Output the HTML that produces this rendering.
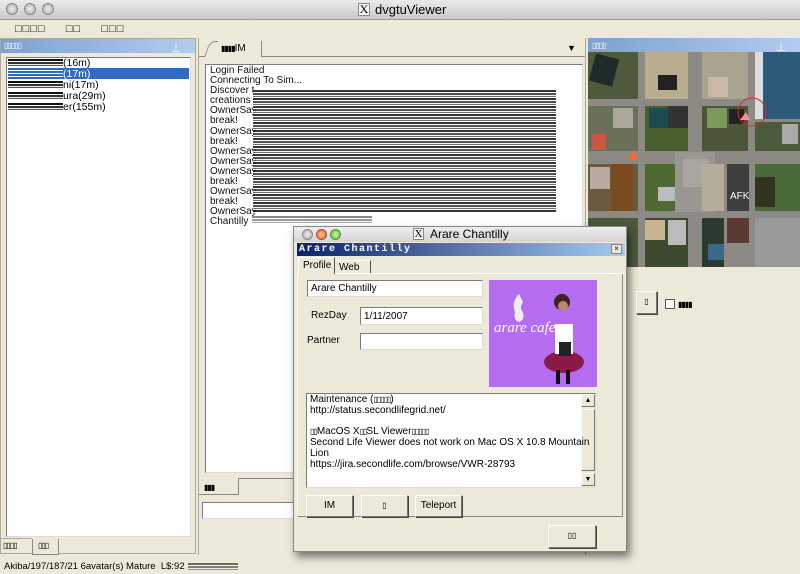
<!DOCTYPE html>
<html><head><style>
*{box-sizing:border-box;margin:0;padding:0}
body{width:800px;height:574px;overflow:hidden;background:#ece9d8;font-family:"Liberation Sans","Noto Sans CJK JP",sans-serif;font-size:11px;color:#000;position:relative}
.a{position:absolute}
.tl{width:12px;height:12px;border-radius:50%;position:absolute}
.sunk{background:#fff;border:1px solid #7a7a7a;border-right-color:#dcdcdc;border-bottom-color:#dcdcdc}
.btn{position:absolute;background:#ece9d8;border:1px solid #fff;border-right-color:#777;border-bottom-color:#777;box-shadow:1px 1px 0 #444;text-align:center;font-size:10px;line-height:20px}
.scr{position:absolute;background:repeating-linear-gradient(180deg,#111 0 2px,#fff 2px 3px,#333 3px 5px,#eee 5px 6px,#555 6px 7px,#fff 7px 8px);}
.mono{font-size:8px;letter-spacing:-1px}
</style></head><body>
<div class="a" style="left:0;top:0;width:800px;height:20px;background:linear-gradient(#ebebeb,#c9c9c9);border-bottom:1px solid #999"></div>
<div class="tl" style="left:6px;top:3px;background:radial-gradient(#eee,#aaa);border:1px solid #888"></div>
<div class="tl" style="left:24px;top:3px;background:radial-gradient(#eee,#aaa);border:1px solid #888"></div>
<div class="tl" style="left:42px;top:3px;background:radial-gradient(#eee,#aaa);border:1px solid #888"></div>
<div class="a" style="left:358px;top:3px;width:12px;height:13px;border:1px solid #888;background:#f4f4f4;font-family:'Liberation Serif',serif;font-size:12px;line-height:11px;text-align:center">X</div>
<div class="a" style="left:375px;top:2px;font-size:13px">dvgtuViewer</div>
<div class="a" style="left:15px;top:23px;font-size:11px;letter-spacing:1px">□□□□&nbsp;&nbsp;&nbsp;&nbsp;&nbsp;□□&nbsp;&nbsp;&nbsp;&nbsp;&nbsp;□□□</div>
<div class="a" style="left:0;top:38px;width:196px;height:516px;border:1px solid #aca899"></div>
<div class="a" style="left:1px;top:39px;width:194px;height:14px;background:linear-gradient(90deg,#7da2ce,#b3cbef)"></div>
<div class="a mono" style="left:4px;top:41px;color:#fff">▯▯▯▯▯</div>
<div class="a" style="left:171px;top:40px;color:#fff;font-size:10px">⊥</div>
<div class="a sunk" style="left:6px;top:57px;width:185px;height:480px"></div>
<div class="a" style="left:8px;top:68px;width:181px;height:11px;background:#316ac5"></div>
<div class="a" style="left:8px;top:58px;line-height:11px;font-size:10.5px">
<div><span class="scr" style="position:relative;display:inline-block;width:55px;height:7px"></span>(16m)</div>
<div style="color:#fff"><span style="display:inline-block;width:55px;height:7px;background:repeating-linear-gradient(180deg,#fff 0 1px,#316ac5 1px 3px)"></span>(17m)</div>
<div><span class="scr" style="position:relative;display:inline-block;width:55px;height:7px"></span>ni(17m)</div>
<div><span class="scr" style="position:relative;display:inline-block;width:55px;height:7px"></span>ura(29m)</div>
<div><span class="scr" style="position:relative;display:inline-block;width:55px;height:7px"></span>er(155m)</div>
</div>
<div class="a" style="left:0;top:538px;width:32px;height:16px;border-top:1px solid #aaa"></div>
<div class="a mono" style="left:3px;top:541px">▯▯▯▯</div>
<div class="a" style="left:32px;top:539px;width:27px;height:16px;border:1px solid #888;border-top:none;background:#ece9d8"></div>
<div class="a mono" style="left:38px;top:541px">▯▯▯</div>
<div class="a" style="left:198px;top:38px;width:388px;height:517px;border-left:1px solid #aca899;border-right:1px solid #aca899"></div>
<div class="a" style="left:199px;top:56px;width:386px;border-top:1px solid #888"></div>
<div class="a" style="left:207px;top:41px;width:52px;height:16px;background:#ece9d8;border:1px solid #888;border-bottom:none;border-radius:6px 0 0 0;transform:skewX(-20deg)"></div>
<div class="a" style="left:218px;top:41px;width:44px;height:16px;background:#ece9d8;border-right:1px solid #888"></div>
<div class="a" style="left:221px;top:43px;font-size:10px"><span class="mono">▮▮▮▮</span>IM</div>
<div class="a" style="left:567px;top:43px;font-size:9px">▼</div>
<div class="a sunk" style="left:205px;top:64px;width:378px;height:409px"></div>
<div class="a" style="left:210px;top:66px;font-size:10px;line-height:10.1px;color:#111">Login Failed<br>Connecting To Sim...<br>Discover t<br>creations<br>OwnerSay<br>break!<br>OwnerSay<br>break!<br>OwnerSay<br>OwnerSay<br>OwnerSay<br>break!<br>OwnerSay<br>break!<br>OwnerSay<br>Chantilly</div>
<div class="scr" style="left:253px;top:90px;width:303px;height:123px;opacity:.85"></div>
<div class="scr" style="left:252px;top:216px;width:120px;height:8px;opacity:.5"></div>
<div class="a" style="left:199px;top:478px;width:40px;height:17px;border-bottom:1px solid #888;border-right:1px solid #888"></div>
<div class="a" style="left:239px;top:478px;width:346px;border-top:1px solid #888"></div>
<div class="a mono" style="left:204px;top:483px">▮▮▮</div>
<div class="a sunk" style="left:202px;top:502px;width:383px;height:17px"></div>
<div class="a" style="left:588px;top:38px;width:212px;height:14px;background:linear-gradient(90deg,#7da2ce,#b3cbef)"></div>
<div class="a mono" style="left:592px;top:41px;color:#fff">▯▯▯▯</div>
<div class="a" style="left:776px;top:39px;color:#fff;font-size:10px">⊥</div>
<svg class="a" style="left:588px;top:52px" width="212" height="215">
<rect width="212" height="215" fill="#8d8a86"/>
<g>
<rect x="0" y="0" width="50" height="47" fill="#4e5a3a"/><rect x="4" y="4" width="24" height="28" fill="#1f2b2b" transform="rotate(15 16 18)"/>
<rect x="57" y="0" width="43" height="47" fill="#b9ac8f"/><rect x="70" y="23" width="19" height="15" fill="#222"/>
<rect x="114" y="0" width="46" height="47" fill="#a8a490"/><rect x="120" y="25" width="20" height="20" fill="#c8b9a7"/>
<rect x="167" y="0" width="45" height="67" fill="#2d5a78"/><rect x="167" y="0" width="8" height="67" fill="#ddd"/>
<rect x="0" y="54" width="50" height="45" fill="#6b7058"/><rect x="25" y="56" width="20" height="20" fill="#aaa89c"/><rect x="4" y="82" width="14" height="16" fill="#c54"/>
<rect x="57" y="54" width="43" height="45" fill="#4a5f2e"/><rect x="61" y="56" width="22" height="20" fill="#1a4c50"/>
<rect x="80" y="54" width="20" height="22" fill="#333"/>
<rect x="114" y="54" width="46" height="45" fill="#4a553a"/><rect x="119" y="56" width="20" height="20" fill="#7a9a5a"/><rect x="141" y="57" width="15" height="15" fill="#222"/>
<rect x="167" y="70" width="45" height="29" fill="#4a5a3a"/><rect x="194" y="72" width="16" height="20" fill="#aaa"/>
<rect x="0" y="112" width="50" height="47" fill="#6a5a40"/><rect x="23" y="112" width="22" height="47" fill="#7a4a20"/><rect x="2" y="115" width="20" height="22" fill="#b8aaa0"/>
<rect x="57" y="112" width="43" height="47" fill="#4e6a30"/><rect x="70" y="135" width="30" height="14" fill="#bbb"/>
<rect x="87" y="100" width="40" height="60" fill="#9a9792"/><rect x="95" y="107" width="26" height="28" fill="#a9a6a0"/>
<rect x="114" y="112" width="22" height="47" fill="#b5ad9c"/>
<rect x="139" y="112" width="22" height="47" fill="#3e3e3e"/><text x="142" y="147" fill="#fff" font-size="10" font-family="Liberation Sans">AFK</text>
<rect x="167" y="112" width="45" height="47" fill="#4a6a3a"/><rect x="167" y="125" width="20" height="30" fill="#332"/>
<rect x="0" y="166" width="50" height="49" fill="#4a5a3a"/>
<rect x="57" y="166" width="43" height="49" fill="#3e4a30"/><rect x="57" y="168" width="20" height="20" fill="#c8b493"/><rect x="80" y="168" width="18" height="25" fill="#bbb"/>
<rect x="114" y="166" width="22" height="49" fill="#2a3a30"/><rect x="139" y="166" width="22" height="25" fill="#5a3a32"/><rect x="120" y="192" width="16" height="16" fill="#3a6a8a"/>
<rect x="167" y="166" width="45" height="49" fill="#999"/>
</g>
<circle cx="164" cy="60" r="14" fill="none" stroke="#e22" stroke-width="1"/>
<polygon points="152,68 158,60 162,68" fill="#f89"/><polygon points="40,107 46,98 50,107" fill="#f63"/>
</svg>
<div class="btn" style="left:636px;top:291px;width:21px;height:23px;font-size:8px">▯</div>
<div class="a" style="left:665px;top:299px;width:10px;height:10px;background:#fff;border:1px solid #555"></div>
<div class="a mono" style="left:678px;top:300px">▮▮▮▮</div>
<div class="a" style="left:4px;top:561px;font-size:9.5px">Akiba/197/187/21 6avatar(s) Mature &nbsp;L$:92</div>
<div class="scr" style="left:188px;top:563px;width:50px;height:7px;opacity:.6"></div>
<div class="a" style="left:293px;top:226px;width:334px;height:326px;background:#ece9d8;border:1px solid #888;box-shadow:3px 5px 8px rgba(0,0,0,.5)"></div>
<div class="a" style="left:294px;top:227px;width:332px;height:15px;background:linear-gradient(#eee,#d4d4d4)"></div>
<div class="tl" style="left:302px;top:229px;width:11px;height:11px;background:radial-gradient(#eee,#aaa);border:1px solid #888"></div>
<div class="tl" style="left:316px;top:229px;width:11px;height:11px;background:radial-gradient(#fc9,#e55f10);border:1px solid #b44"></div>
<div class="tl" style="left:330px;top:229px;width:11px;height:11px;background:radial-gradient(#cfa,#5a2);border:1px solid #494"></div>
<div class="a" style="left:413px;top:228px;width:11px;height:12px;border:1px solid #888;background:#f4f4f4;font-family:'Liberation Serif',serif;font-size:11px;line-height:10px;text-align:center">X</div>
<div class="a" style="left:430px;top:227px;font-size:12px">Arare Chantilly</div>
<div class="a" style="left:297px;top:243px;width:328px;height:13px;background:linear-gradient(90deg,#0a246a,#a6caf0)"></div>
<div class="a" style="left:299px;top:243px;color:#fff;font-weight:bold;font-size:10px;line-height:14px;letter-spacing:1.5px;font-family:'Liberation Mono',monospace">Arare Chantilly</div>
<div class="a" style="left:611px;top:244px;width:11px;height:10px;background:#ece9d8;border:1px solid #888;font-size:8px;line-height:8px;text-align:center">×</div>
<div class="a" style="left:297px;top:273px;width:326px;height:244px;border:1px solid #888;border-top-color:#fff;border-left-color:#fff"></div>
<div class="a" style="left:298px;top:257px;width:37px;height:17px;background:#ece9d8;border:1px solid #fff;border-right:1px solid #555;border-bottom:none;font-size:10px;padding:2px 0 0 4px">Profile</div>
<div class="a" style="left:336px;top:260px;width:35px;height:13px;border-right:1px solid #555;border-top:1px solid #fff;font-size:10px;padding:1px 0 0 3px">Web</div>
<div class="a" style="left:371px;top:273px;width:252px;border-top:1px solid #fff"></div>
<div class="a sunk" style="left:307px;top:280px;width:176px;height:17px;font-size:10px;padding:2px 3px">Arare Chantilly</div>
<div class="a" style="left:311px;top:310px;font-size:10px">RezDay</div>
<div class="a sunk" style="left:360px;top:307px;width:123px;height:18px;font-size:10px;padding:3px 3px">1/11/2007</div>
<div class="a" style="left:307px;top:335px;font-size:10px">Partner</div>
<div class="a sunk" style="left:360px;top:333px;width:123px;height:17px"></div>
<svg class="a" style="left:489px;top:280px" width="108" height="107">
<rect width="108" height="107" fill="#b46df0"/>
<path d="M30 14 q-8 8 -4 18 q-2 8 4 10 q6 -2 4 -10 q-4 -4 0 -10z" fill="#eee"/>
<text x="5" y="52" fill="#fff" font-family="Liberation Serif" font-style="italic" font-size="15">arare cafe</text>
<ellipse cx="75" cy="82" rx="20" ry="11" fill="#8a1a4a"/>
<rect x="66" y="44" width="18" height="30" fill="#fff"/>
<rect x="70" y="62" width="12" height="14" fill="#222"/>
<circle cx="73" cy="22" r="8" fill="#3a2520"/>
<circle cx="74" cy="26" r="5" fill="#b88870"/>
<rect x="67" y="90" width="4" height="14" fill="#111"/><rect x="77" y="90" width="4" height="14" fill="#111"/>
</svg>
<div class="a sunk" style="left:306px;top:393px;width:290px;height:95px"></div>
<div class="a" style="left:581px;top:394px;width:14px;height:93px;background:#ece9d8"></div>
<div class="btn" style="left:581px;top:394px;width:14px;height:13px;font-size:7px;line-height:12px;box-shadow:none">▲</div>
<div class="btn" style="left:581px;top:409px;width:14px;height:62px;box-shadow:none"></div>
<div class="btn" style="left:581px;top:473px;width:14px;height:13px;font-size:7px;line-height:12px;box-shadow:none">▼</div>
<div class="a" style="left:310px;top:395px;font-size:10px;line-height:10.8px">Maintenance (<span class="mono">▯▯▯▯▯</span>)<br>http://status.secondlifegrid.net/<br><br><span class="mono">▯▯</span>MacOS X<span class="mono">▯▯</span>SL Viewer<span class="mono">▯▯▯▯▯</span><br>Second Life Viewer does not work on Mac OS X 10.8 Mountain<br>Lion<br>https://jira.secondlife.com/browse/VWR-28793</div>
<div class="btn" style="left:306px;top:495px;width:47px;height:22px">IM</div>
<div class="btn" style="left:361px;top:495px;width:47px;height:22px;font-size:8px">▯</div>
<div class="btn" style="left:415px;top:495px;width:47px;height:22px">Teleport</div>
<div class="btn" style="left:548px;top:525px;width:48px;height:23px;font-size:8px">▯▯</div>
</body></html>
